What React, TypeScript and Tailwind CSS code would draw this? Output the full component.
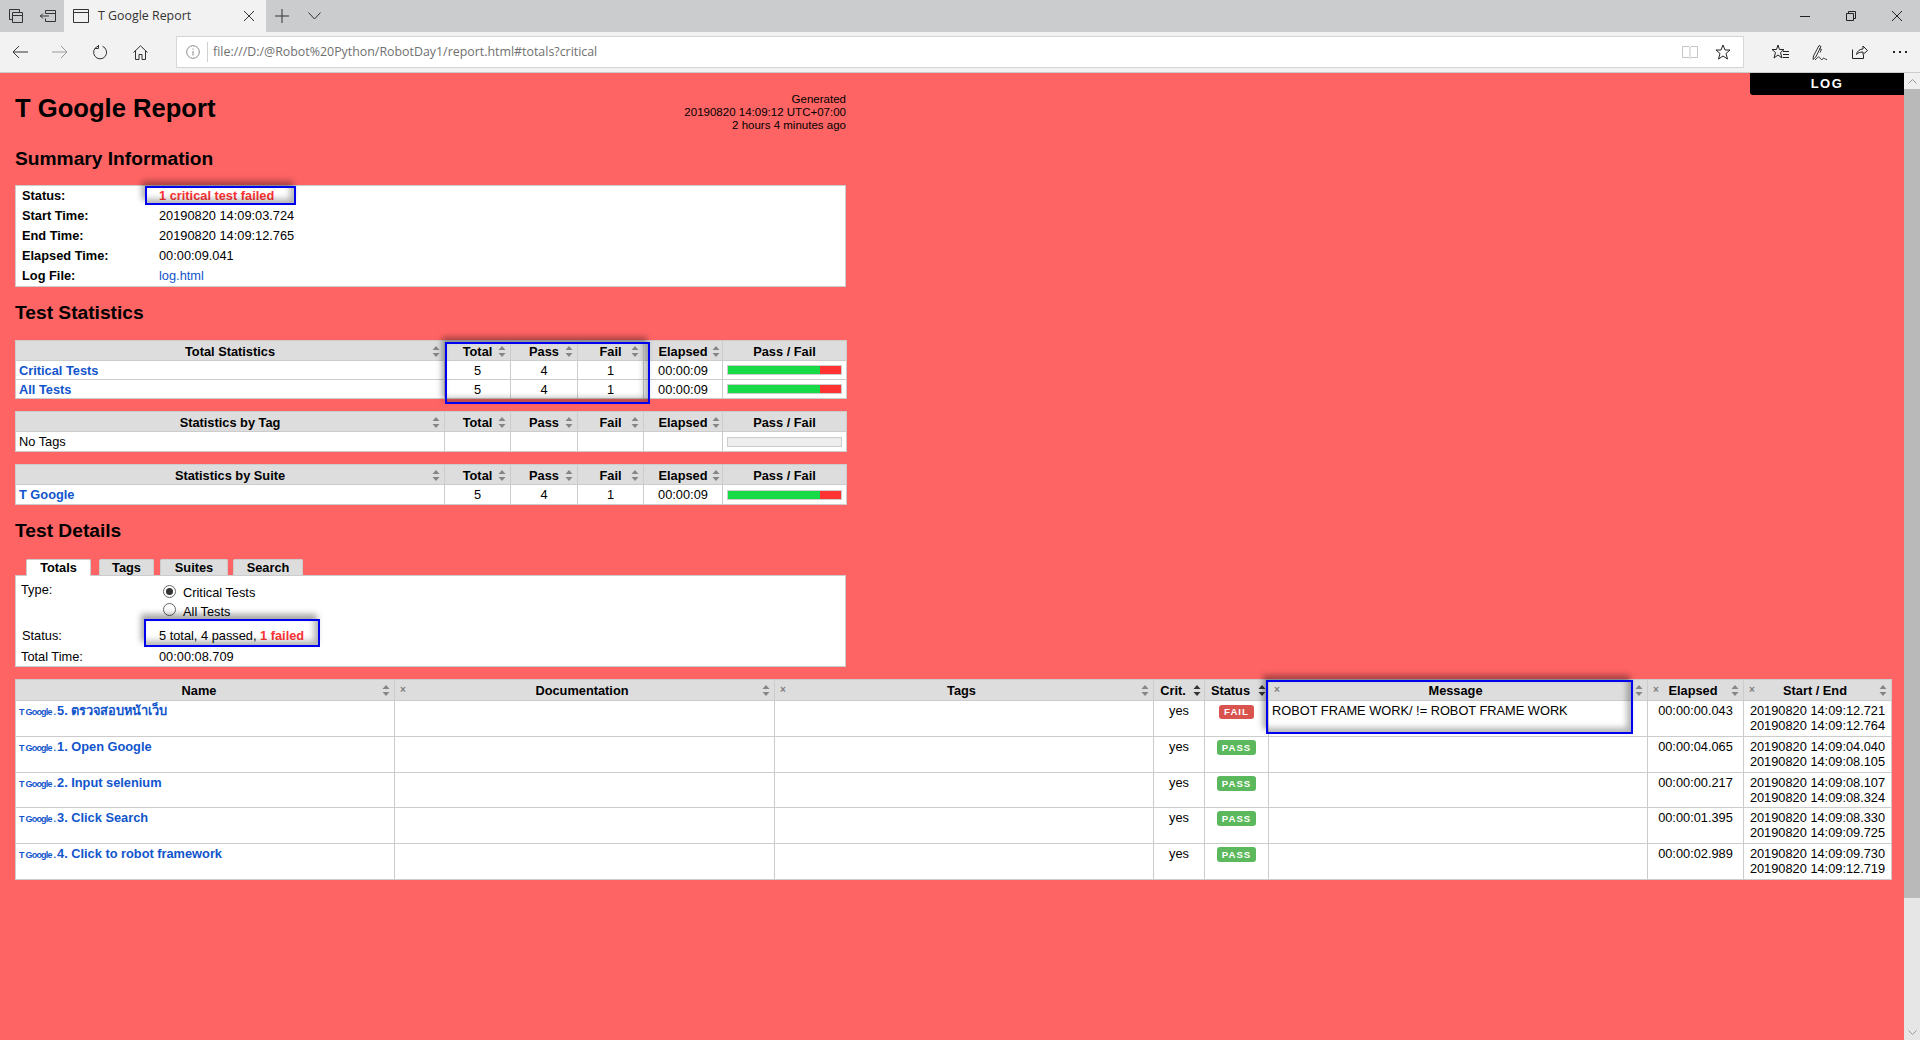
import React from "react";

const Sort = ({ dark = false, right = 4 }: { dark?: boolean; right?: number }) => (
  <svg width="8" height="11" viewBox="0 0 8 11" className="absolute top-[5px]" style={{ right }}>
    <path d="M4 0 L7.5 4 L0.5 4 Z M4 11 L7.5 7 L0.5 7 Z" fill={dark ? "#333" : "#858585"} />
  </svg>
);

const Hide = () => <span className="absolute left-[5px] top-[3px] text-[10px] leading-[14px] font-bold text-[#808080]">×</span>;

const Th = ({ label, hide = false, dark = false, pad = "", right = 4 }: { label: string; hide?: boolean; dark?: boolean; pad?: string; right?: number }) => (
  <th className={"relative border border-[#cccccc] bg-[#dddddd] p-0 text-center align-middle leading-[15px] font-bold text-black " + pad}>
    {hide && <Hide />}
    {label}
    <Sort dark={dark} right={right} />
  </th>
);

const Bar = ({ empty = false }: { empty?: boolean }) => (
  <div className="mx-auto flex h-[10px] w-[115px] border border-[#cccccc] bg-[#eeeeee]">
    {!empty && <div className="h-full w-[92px] bg-[#16db46]" />}
    {!empty && <div className="h-full flex-1 bg-[#ff3333]" />}
  </div>
);

const StatTable = ({ title, rowH, rows }: { title: string; rowH: string; rows: { name: string; link?: boolean; empty?: boolean }[] }) => (
  <table className="w-[831px] table-fixed border-collapse bg-white text-black">
    <colgroup>
      <col className="w-[429px]" />
      <col className="w-[66px]" />
      <col className="w-[67px]" />
      <col className="w-[66px]" />
      <col className="w-[79px]" />
      <col className="w-[124px]" />
    </colgroup>
    <thead>
      <tr className="h-[20px]">
        <Th label={title} pad="pt-[1px]" />
        <Th label="Total" pad="pt-[1px]" />
        <Th label="Pass" pad="pt-[1px]" />
        <Th label="Fail" pad="pt-[1px]" />
        <Th label="Elapsed" pad="pt-[1px]" right={2} />
        <th className="border border-[#cccccc] bg-[#dddddd] p-0 pt-[1px] text-center leading-[15px] font-bold">Pass / Fail</th>
      </tr>
    </thead>
    <tbody>
      {rows.map((r) => (
        <tr key={r.name} className={rowH + " leading-[15px]"}>
          <td className={"border border-[#cccccc] px-[3px] py-0 " + (r.link ? "font-bold text-[#1155cc]" : "")}>{r.name}</td>
          <td className="border border-[#cccccc] p-0 text-center">{r.empty ? "" : "5"}</td>
          <td className="border border-[#cccccc] p-0 text-center">{r.empty ? "" : "4"}</td>
          <td className="border border-[#cccccc] p-0 text-center">{r.empty ? "" : "1"}</td>
          <td className="border border-[#cccccc] p-0 text-center">{r.empty ? "" : "00:00:09"}</td>
          <td className="border border-[#cccccc] p-0"><Bar empty={r.empty} /></td>
        </tr>
      ))}
    </tbody>
  </table>
);

const H2 = ({ children, className = "" }: { children: React.ReactNode; className?: string }) => (
  <h2 className={"text-[19.2px] leading-[24px] font-bold text-black " + className}>{children}</h2>
);

const BlueBox = ({ className }: { className: string }) => (
  <div className={"pointer-events-none absolute border-2 border-[#0000f0] shadow-[-3px_-5px_6px_rgba(0,0,0,0.35),inset_-4px_-4px_6px_rgba(0,0,0,0.3)] " + className} />
);

const tests = [
  { name: "5. ตรวจสอบหน้าเว็บ", h: "h-[36px]", status: "FAIL", msg: "ROBOT FRAME WORK/ != ROBOT FRAME WORK", el: "00:00:00.043", a: "20190820 14:09:12.721", b: "20190820 14:09:12.764" },
  { name: "1. Open Google", h: "h-[36px]", status: "PASS", msg: "", el: "00:00:04.065", a: "20190820 14:09:04.040", b: "20190820 14:09:08.105" },
  { name: "2. Input selenium", h: "h-[35px]", status: "PASS", msg: "", el: "00:00:00.217", a: "20190820 14:09:08.107", b: "20190820 14:09:08.324" },
  { name: "3. Click Search", h: "h-[36px]", status: "PASS", msg: "", el: "00:00:01.395", a: "20190820 14:09:08.330", b: "20190820 14:09:09.725" },
  { name: "4. Click to robot framework", h: "h-[36px]", status: "PASS", msg: "", el: "00:00:02.989", a: "20190820 14:09:09.730", b: "20190820 14:09:12.719" },
];

const Td = ({ className = "", children }: { className?: string; children?: React.ReactNode }) => (
  <td className={"border border-[#cccccc] p-0 pt-[2px] align-top leading-[15px] " + className}>{children}</td>
);

const stroke = { fill: "none", stroke: "#333", strokeWidth: 1 };

export default function App() {
  return (
    <div className="flex h-[1040px] w-[1920px] flex-col overflow-hidden font-['Liberation_Sans',sans-serif] text-[12.8px]">
      {/* tab strip */}
      <div className="flex h-8 shrink-0 items-stretch bg-[#cbcccd] font-['Open_Sans',sans-serif] text-[#333]">
        <div className="flex w-8 items-center justify-center">
          <svg width="16" height="16" viewBox="0 0 16 16" {...stroke}><path d="M1.5 1.5h10v3M1.5 1.5v10h3M4.5 4.5h10v10h-10zM4.5 7.5h10" /></svg>
        </div>
        <div className="flex w-8 items-center justify-center">
          <svg width="16" height="12" viewBox="0 0 16 12" {...stroke}><path d="M5.5 3.5v-3h10v11h-10v-3M0 6h9M3 3.5L.5 6 3 8.500M5.500 3.500h10" /></svg>
        </div>
        <div className="flex w-[202px] items-center bg-[#f2f2f2] pl-[9px]">
          <svg width="16" height="14" viewBox="0 0 16 14" {...stroke}><path d="M.5.5h15v13h-15zM.5 3.500h15" /></svg>
          <span className="ml-[9px] w-[146px] text-[12.400px]">T Google Report</span>
          <svg width="10" height="10" viewBox="0 0 10 10" {...stroke}><path d="M0 0L10 10M10 0L0 10" /></svg>
        </div>
        <div className="flex w-8 items-center justify-center">
          <svg width="14" height="14" viewBox="0 0 14 14" {...stroke}><path d="M7 0v14M0 7h14" /></svg>
        </div>
        <div className="flex w-8 items-center justify-center">
          <svg width="13" height="8" viewBox="0 0 13 8" {...stroke}><path d="M.5.5L6.500 7 12.500.5" /></svg>
        </div>
        <div className="flex-1" />
        <div className="flex w-[46px] items-center justify-center">
          <svg width="10" height="1" viewBox="0 0 10 1"><path d="M0 .5h10" stroke="#222" /></svg>
        </div>
        <div className="flex w-[46px] items-center justify-center">
          <svg width="10" height="10" viewBox="0 0 10 10" fill="none" stroke="#222"><path d="M.5 2.500h7v7h-7zM2.500 2.500v-2h7v7h-2" /></svg>
        </div>
        <div className="flex w-[46px] items-center justify-center">
          <svg width="10" height="10" viewBox="0 0 10 10" stroke="#222"><path d="M0 0L10 10M10 0L0 10" /></svg>
        </div>
      </div>

      {/* toolbar */}
      <div className="flex h-[41px] shrink-0 border-b border-[#cccccc] bg-[#f2f2f2] font-['Open_Sans',sans-serif]">
        <div className="flex h-10 w-10 items-center justify-center">
          <svg width="16" height="14" viewBox="0 0 16 14" {...stroke}><path d="M16 7H1M7 1L1 7l6 6" /></svg>
        </div>
        <div className="flex h-10 w-10 items-center justify-center">
          <svg width="16" height="14" viewBox="0 0 16 14" fill="none" stroke="#9a9a9a"><path d="M0 7h15M9 1l6 6-6 6" /></svg>
        </div>
        <div className="flex h-10 w-10 items-center justify-center">
          <svg width="15" height="15" viewBox="0 0 15 15" {...stroke}><path d="M5 1.200A6.500 6.500 0 1 0 9.500 1.300M5.500 0v3.500H2" /></svg>
        </div>
        <div className="flex h-10 w-10 items-center justify-center">
          <svg width="15" height="15" viewBox="0 0 15 15" {...stroke}><path d="M.5 7.500L7.500.8l7 6.700M2.500 6v8.500h3.500v-5h3v5h3.500V6" /></svg>
        </div>
        <div className="ml-4 mt-1 flex h-8 flex-1 items-center border border-[#d6d6d6] bg-white">
          <svg width="14" height="14" viewBox="0 0 14 14" className="ml-[9px]" fill="none" stroke="#8a8a8a"><circle cx="7" cy="7" r="6.300" /><path d="M7 6v4.500M7 3.500v1.200" /></svg>
          <div className="ml-[7px] h-5 w-px bg-[#d0d0d0]" />
          <span className="ml-[5px] mt-[1px] flex-1 text-[12.400px] text-[#707070]">file:///D:/@Robot%20Python/RobotDay1/report.html#totals?critical</span>
          <svg width="16" height="14" viewBox="0 0 16 14" fill="none" stroke="#c4c4c4"><path d="M.5 1.500h6.500l1 1 1-1h6.500v11H9l-1 1-1-1H.500zM8 2.500v10" /></svg>
          <svg width="16" height="16" viewBox="0 0 16 16" className="ml-[17px] mr-[12px]" fill="none" stroke="#222"><path d="M8 1l2 5h5l-4 3.500 1.500 5.500L8 12l-4.500 3L5 9.500 1 6h5z" /></svg>
        </div>
        <div className="ml-4 flex h-10 w-10 items-center justify-center">
          <svg width="17" height="16" viewBox="0 0 17 16" fill="none" stroke="#222"><path d="M6 1l1.500 4.500H12L8.500 8.500 10 14 6 11l-4 3 1.500-5.500L0 5.500h4.500zM11 7.500h6M11 10.500h6M11 13.500h6" /></svg>
        </div>
        <div className="flex h-10 w-10 items-center justify-center">
          <svg width="16" height="17" viewBox="0 0 16 17" fill="none" stroke="#333"><path d="M1.500 12L7 1.500l2 1L3.800 13 1 15.500zM7.500 4.500l2 1-1.500 3M3 16c3-3 4-4 5-2s3 2 3 .5 2 1 4 1" /></svg>
        </div>
        <div className="flex h-10 w-10 items-center justify-center">
          <svg width="16" height="14" viewBox="0 0 16 14" fill="none" stroke="#222"><path d="M.5 4.500v9h11V10M4.500 9.500C5 6 8 4 11 4V1l4.500 4.500L11 9.500V7c-3 0-5 .8-6.500 2.500z" /></svg>
        </div>
        <div className="flex h-10 w-10 items-center justify-center gap-[4px]">
          <div className="h-[2px] w-[2px] bg-[#222]" /><div className="h-[2px] w-[2px] bg-[#222]" /><div className="h-[2px] w-[2px] bg-[#222]" />
        </div>
      </div>

      {/* content */}
      <div className="flex min-h-0 flex-1">
        <div className="relative min-w-0 flex-1 bg-[#ff6464] px-[15px] pt-[20px]">
          <div className="absolute right-0 top-0 flex h-[22px] w-[154px] items-center justify-center rounded-bl-[3px] bg-black text-[13px] font-bold tracking-[1.500px] text-white">LOG</div>

          <div className="flex w-[831px] items-start justify-between">
            <h1 className="-mt-px text-[25.6px] leading-[32px] font-bold text-black">T Google Report</h1>
            <div className="text-right text-[11.52px] leading-[13px] text-black">
              Generated<br />20190820 14:09:12 UTC+07:00<br />2 hours 4 minutes ago
            </div>
          </div>

          <H2 className="mt-[15px]">Summary Information</H2>
          <div className="relative mt-[14px] w-[831px] border border-[#cccccc] bg-white text-black">
            <table className="w-full border-collapse leading-[20px]">
              <tbody>
                {[
                  ["Status:", <span className="font-bold text-[#ff3333]">1 critical test failed</span>],
                  ["Start Time:", "20190820 14:09:03.724"],
                  ["End Time:", "20190820 14:09:12.765"],
                  ["Elapsed Time:", "00:00:09.041"],
                  ["Log File:", <span className="text-[#1155cc]">log.html</span>],
                ].map(([k, v], i) => (
                  <tr key={i} className="h-[20px]">
                    <th className="w-[143px] p-0 pl-[6px] text-left font-bold">{k}</th>
                    <td className="p-0">{v}</td>
                  </tr>
                ))}
              </tbody>
            </table>
            <BlueBox className="left-[129px] top-0 h-[19px] w-[151px]" />
          </div>

          <H2 className="mt-[14px]">Test Statistics</H2>
          <div className="relative mt-[15px] w-[831px]">
            <StatTable title="Total Statistics" rowH="h-[19px]" rows={[{ name: "Critical Tests", link: true }, { name: "All Tests", link: true }]} />
            <BlueBox className="left-[430px] top-[2px] h-[62px] w-[205px]" />
          </div>
          <div className="mt-[12px]">
            <StatTable title="Statistics by Tag" rowH="h-[20px]" rows={[{ name: "No Tags", empty: true }]} />
          </div>
          <div className="mt-[12px]">
            <StatTable title="Statistics by Suite" rowH="h-[20px]" rows={[{ name: "T Google", link: true }]} />
          </div>

          <H2 className="mt-[14px]">Test Details</H2>
          <div className="ml-[11px] mt-[16px] flex h-[16px] items-end font-bold text-black">
            <div className="relative z-10 -mb-px flex h-[17px] w-[65px] items-center justify-center rounded-t-[2px] border border-b-0 border-[#cccccc] bg-white">Totals</div>
            <div className="ml-2 flex h-[16px] w-[55px] items-center justify-center rounded-t-[2px] border border-b-0 border-[#cccccc] bg-[#dddddd]">Tags</div>
            <div className="ml-[6px] flex h-[16px] w-[68px] items-center justify-center rounded-t-[2px] border border-b-0 border-[#cccccc] bg-[#dddddd]">Suites</div>
            <div className="ml-[5px] flex h-[16px] w-[70px] items-center justify-center rounded-t-[2px] border border-b-0 border-[#cccccc] bg-[#dddddd]">Search</div>
          </div>
          <div className="relative h-[92px] w-[831px] border border-[#cccccc] bg-white text-black">
            <div className="flex h-[50px]">
              <div className="w-[141px] pl-[5px] pt-[6px] font-normal leading-[15px]">Type:</div>
              <div className="pt-[8px] leading-[18.500px]">
                <div className="flex items-center">
                  <span className="-mt-[4px] ml-[6px] flex h-[13px] w-[13px] items-center justify-center rounded-full border border-[#666666] bg-white">
                    <span className="h-[7px] w-[7px] rounded-full bg-[#333333]" />
                  </span>
                  <span className="ml-[7px]">Critical Tests</span>
                </div>
                <div className="flex items-center">
                  <span className="-mt-[4px] ml-[6px] h-[13px] w-[13px] rounded-full border border-[#666666] bg-white" />
                  <span className="ml-[7px]">All Tests</span>
                </div>
              </div>
            </div>
            <div className="flex h-[20px] items-center">
              <div className="w-[143px] pl-[6px]">Status:</div>
              <div>5 total, 4 passed, <span className="font-bold text-[#ff3333]">1 failed</span></div>
            </div>
            <div className="flex h-[21px] items-center">
              <div className="w-[143px] pl-[5px]">Total Time:</div>
              <div>00:00:08.709</div>
            </div>
            <BlueBox className="left-[128px] top-[43px] h-[28px] w-[176px]" />
          </div>

          <div className="relative mt-[12px] w-[1876px]">
            <table className="w-[1876px] table-fixed border-collapse bg-white text-black">
              <colgroup>
                <col className="w-[379px]" />
                <col className="w-[380px]" />
                <col className="w-[379px]" />
                <col className="w-[51px]" />
                <col className="w-[64px]" />
                <col className="w-[379px]" />
                <col className="w-[96px]" />
                <col className="w-[148px]" />
              </colgroup>
              <thead>
                <tr className="h-[21px]">
                  <Th label="Name" pad="pr-[12px]" />
                  <Th label="Documentation" hide pad="pr-[5px]" />
                  <Th label="Tags" hide pad="pr-[5px]" />
                  <Th label="Crit." dark pad="pr-[12px]" right={3} />
                  <Th label="Status" dark pad="pr-[12px]" right={2} />
                  <Th label="Message" hide pad="pr-[5px]" />
                  <Th label="Elapsed" hide pad="pr-[5px]" />
                  <Th label="Start / End" hide pad="pr-[5px]" />
                </tr>
              </thead>
              <tbody>
                {tests.map((t) => (
                  <tr key={t.name} className={t.h}>
                    <Td className="pl-[3px] font-bold text-[#1155cc]">
                      <span className="text-[8.960px] tracking-[-0.750px]">T Google . </span>
                      <span className="font-['Liberation_Sans','Noto_Sans','DejaVu_Sans',sans-serif]">{t.name}</span>
                    </Td>
                    <Td />
                    <Td />
                    <Td className="text-center">yes</Td>
                    <Td className="text-center">
                      <span className={"mt-[1px] inline-block rounded-[3px] text-[9.600px] font-bold tracking-[1px] text-white " + (t.status === "FAIL" ? "h-[14px] w-[35px] bg-[#d9534f] leading-[14px]" : "h-[15px] w-[39px] bg-[#5cb85c] leading-[15px]")}>{t.status}</span>
                    </Td>
                    <Td className="pl-[3px]">{t.msg}</Td>
                    <Td className="text-center">{t.el}</Td>
                    <Td className="text-center">{t.a}<br />{t.b}</Td>
                  </tr>
                ))}
              </tbody>
            </table>
            <BlueBox className="left-[1251px] top-[1px] h-[54px] w-[367px]" />
          </div>
        </div>

        {/* scrollbar */}
        <div className="flex w-4 shrink-0 flex-col bg-[#e6e6e6]">
          <div className="flex h-4 shrink-0 items-center justify-center bg-[#f0f0f0]">
            <svg width="9" height="5" viewBox="0 0 9 5" fill="none" stroke="#999"><path d="M.5 4.500l4-4 4 4" /></svg>
          </div>
          <div className="h-[809px] shrink-0 bg-[#b9b9b9]" />
          <div className="flex-1" />
          <div className="flex h-4 shrink-0 items-center justify-center">
            <svg width="9" height="5" viewBox="0 0 9 5" fill="none" stroke="#999"><path d="M.5.5l4 4 4-4" /></svg>
          </div>
        </div>
      </div>
    </div>
  );
}
